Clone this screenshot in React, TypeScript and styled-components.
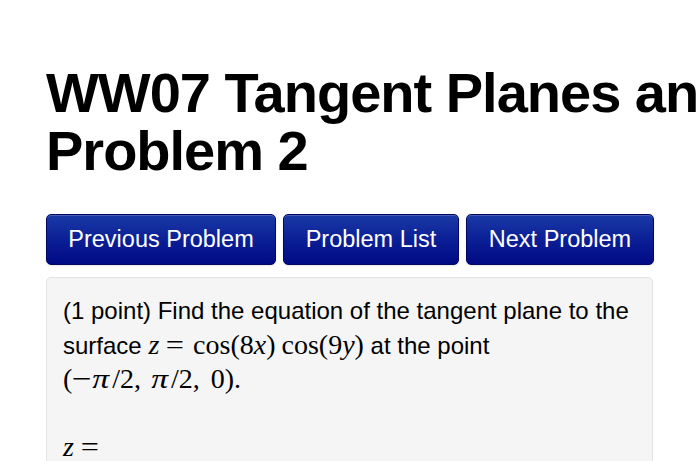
import React from "react";
import styled, { createGlobalStyle } from "styled-components";

const Global = createGlobalStyle`
  html, body { margin: 0; padding: 0; background: #ffffff; overflow: hidden; }
  body { width: 700px; height: 461px; }
`;

const Page = styled.div`
  width: 900px;
  padding: 72px 0 0 46px;
  font-family: "Liberation Sans", Arial, Helvetica, sans-serif;
  color: #000;
`;

const Title = styled.h1`
  margin: 0;
  font-size: 56px;
  line-height: 58px;
  font-weight: 700;
  letter-spacing: -1px;
  white-space: nowrap;
  margin-top: -8px;
`;

const TitleLine = styled.div`
  display: block;
`;

const Nav = styled.div`
  display: flex;
  gap: 7px;
  margin-top: 34px;
`;

const NavButton = styled.button<{ $w: number }>`
  width: ${(p) => p.$w}px;
  height: 51px;
  border: 1px solid #020763;
  border-radius: 5px;
  background: linear-gradient(to bottom, #1a3aa6 0%, #0b1f96 50%, #000a84 100%);
  color: #ffffff;
  font-family: "Liberation Sans", Arial, Helvetica, sans-serif;
  font-size: 23.5px;
  padding: 0;
  box-shadow: inset 0 1px 0 rgba(255, 255, 255, 0.2), 0 1px 2px rgba(0, 0, 0, 0.1);
`;

const Well = styled.div`
  margin-top: 12px;
  width: 607px;
  height: 240px;
  box-sizing: border-box;
  background: #f5f5f5;
  border: 1px solid #e3e3e3;
  border-radius: 5px;
  padding: 16px 16px;
  font-size: 24px;
  line-height: 33.5px;
`;

const Para = styled.p`
  margin: 0;
`;

const Math = styled.span`
  font-family: "Liberation Serif", "Times New Roman", serif;
  font-size: 28px;
  white-space: nowrap;
`;

const V = styled.i`
  font-family: "Liberation Serif", "Times New Roman", serif;
  font-style: italic;
`;

const Op = styled.span`
  display: inline-block;
  padding: 0 10px 0 8px;
  transform: scaleX(1.15);
`;

const Minus = styled.span`
  display: inline-block;
  padding: 0 3px 0 2px;
  transform: scaleX(1.25);
`;

const Pi = styled.i`
  font-style: italic;
  display: inline-block;
  padding: 0 4px 0 1px;
  transform: scaleX(1.2);
`;

const Thin = styled.span<{ $w?: number }>`
  display: inline-block;
  width: ${(p) => p.$w ?? 6}px;
`;

const Answer = styled.div`
  margin-top: 33px;
`;

export default function App() {
  return (
    <>
      <Global />
      <Page>
        <Title>
          <TitleLine>WW07 Tangent Planes and Linear Approximation:</TitleLine>
          <TitleLine>Problem 2</TitleLine>
        </Title>
        <Nav>
          <NavButton $w={230}>Previous Problem</NavButton>
          <NavButton $w={176}>Problem List</NavButton>
          <NavButton $w={188}>Next Problem</NavButton>
        </Nav>
        <Well>
          <Para>
            (1 point) Find the equation of the tangent plane to the surface{" "}
            <Math>
              <V>z</V>
              <Op>=</Op>cos(8<V>x</V>)<Thin />cos(9<V>y</V>)
            </Math>{" "}
            at the point{" "}
            <Math>
              (<Minus>−</Minus>
              <Pi>π</Pi>/2,<Thin $w={11} />
              <Pi>π</Pi>/2,<Thin $w={11} />0).
            </Math>
          </Para>
          <Answer>
            <Math>
              <V>z</V>
              <Op>=</Op>
            </Math>
          </Answer>
        </Well>
      </Page>
    </>
  );
}
